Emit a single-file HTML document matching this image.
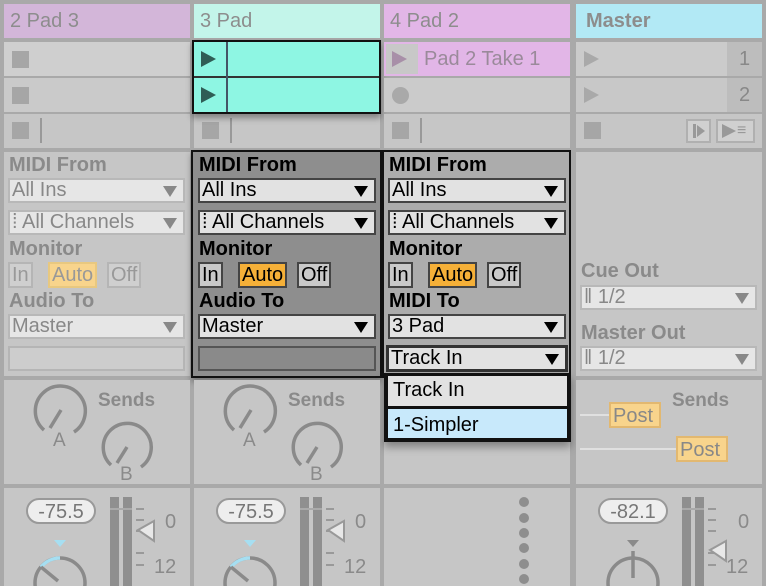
<!DOCTYPE html>
<html><head><meta charset="utf-8"><style>
*{box-sizing:border-box;margin:0;padding:0}
body{width:766px;height:586px;overflow:hidden;background:#a9a9a9;font-family:"Liberation Sans",sans-serif;position:relative}
.a{position:absolute}
.p{position:absolute;background:#c6c6c6}
.t{position:absolute;font-size:20px;white-space:nowrap;line-height:20px}
.b{font-weight:bold}
.g{color:#8a8a8a}
.dd{position:absolute;height:25px;background:#e6e6e6;border:2px solid #b8b8b8;font-size:20px;line-height:21px;padding-left:2px;white-space:nowrap}
.dd.k{border-color:#444;color:#000;background:#e2e2e2}
.dd .ar{position:absolute;right:6px;top:6px;width:0;height:0;border-left:7px solid transparent;border-right:7px solid transparent;border-top:11px solid #888}
.dd.k .ar{border-top-color:#000}
.btn{position:absolute;height:26px;border:2px solid #b5b5b5;font-size:20px;line-height:22px;padding:0 2px;color:#999;background:#cfcfcf}
.sq{position:absolute;width:17px;height:17px;background:#a6a6a6}
.pl{position:absolute;width:0;height:0;border-top:8px solid transparent;border-bottom:8px solid transparent;border-left:15px solid #a9a9a9}
</style></head><body>
<div class="p" style="left:4px;top:4px;width:186px;height:34px;background:#d3b6d9"></div>
<div class="t" style="left:10px;top:11px;color:#8d8d8d">2 Pad 3</div>
<div class="p" style="left:194px;top:4px;width:186px;height:34px;background:#c3f5ea"></div>
<div class="t" style="left:200px;top:11px;color:#8d8d8d">3 Pad</div>
<div class="p" style="left:384px;top:4px;width:186px;height:34px;background:#e2b6e7"></div>
<div class="t" style="left:390px;top:11px;color:#8d8d8d">4 Pad 2</div>
<div class="p" style="left:576px;top:4px;width:186px;height:34px;background:#b2e9f5"></div>
<div class="t b" style="left:586px;top:11px;color:#8d8d8d">Master</div>

<div class="p" style="left:4px;top:42px;width:186px;height:34px;background:#cfcfcf"></div>
<div class="sq" style="left:12px;top:51px"></div>
<div class="p" style="left:4px;top:78px;width:186px;height:34px;background:#cacaca"></div>
<div class="sq" style="left:12px;top:87px"></div>
<div class="p" style="left:4px;top:114px;width:186px;height:34px"></div>
<div class="sq" style="left:12px;top:122px"></div>
<div class="a" style="left:40px;top:118px;width:2px;height:25px;background:#999"></div>
<div class="p" style="left:194px;top:114px;width:186px;height:34px"></div>
<div class="sq" style="left:202px;top:122px"></div>
<div class="a" style="left:230px;top:118px;width:2px;height:25px;background:#999"></div>
<div class="a" style="left:192px;top:40px;width:189px;height:74px;background:#8ef6e3;border:2px solid #111;box-shadow:0 4px 6px rgba(0,0,0,.35)"></div>
<div class="a" style="left:194px;top:76px;width:185px;height:2px;background:#333"></div>
<div class="a" style="left:226px;top:42px;width:2px;height:70px;background:#456"></div>
<div class="pl" style="left:201px;top:51px;border-left-color:#2f5d55"></div>
<div class="pl" style="left:201px;top:87px;border-left-color:#2f5d55"></div>
<div class="p" style="left:384px;top:42px;width:186px;height:34px;background:#e2b6e7"></div>
<div class="a" style="left:386px;top:44px;width:32px;height:30px;background:#c8c8c8"></div>
<div class="pl" style="left:392px;top:51px;border-left-color:#a88fa8"></div>
<div class="t" style="left:424px;top:49px;color:#9a8a9a">Pad 2 Take 1</div>
<div class="p" style="left:384px;top:78px;width:186px;height:34px;background:#cbcbcb"></div>
<div class="a" style="left:392px;top:87px;width:17px;height:17px;border-radius:50%;background:#a9a9a9"></div>
<div class="p" style="left:384px;top:114px;width:186px;height:34px"></div>
<div class="sq" style="left:392px;top:122px"></div>
<div class="a" style="left:420px;top:118px;width:2px;height:25px;background:#999"></div>
<div class="p" style="left:576px;top:42px;width:186px;height:34px;background:#cbcbcb"></div>
<div class="a" style="left:727px;top:42px;width:35px;height:34px;background:#bdbdbd"></div>
<div class="pl" style="left:584px;top:51px"></div>
<div class="t" style="left:739px;top:49px;color:#888">1</div>
<div class="p" style="left:576px;top:78px;width:186px;height:34px;background:#c8c8c8"></div>
<div class="a" style="left:727px;top:78px;width:35px;height:34px;background:#bdbdbd"></div>
<div class="pl" style="left:584px;top:87px"></div>
<div class="t" style="left:739px;top:85px;color:#888">2</div>
<div class="p" style="left:576px;top:114px;width:186px;height:34px"></div>
<div class="sq" style="left:584px;top:122px"></div>
<div class="a" style="left:686px;top:119px;width:25px;height:24px;border:2px solid #b0b0b0;background:#d0d0d0"></div>
<div class="a" style="left:693px;top:124px;width:3px;height:14px;background:#999"></div>
<div class="pl" style="left:697px;top:125px;border-top-width:6px;border-bottom-width:6px;border-left-width:8px;border-left-color:#999"></div>
<div class="a" style="left:716px;top:119px;width:39px;height:24px;border:2px solid #b0b0b0;background:#d0d0d0"></div>
<div class="pl" style="left:722px;top:124px;border-top-width:7px;border-bottom-width:7px;border-left-width:14px;border-left-color:#999"></div>
<div class="t" style="left:737px;top:121px;color:#999;font-size:16px">≡</div>

<div class="p" style="left:4px;top:152px;width:186px;height:224px"></div>
<div class="t b g" style="left:9px;top:155px">MIDI From</div>
<div class="dd" style="left:8px;top:178px;width:177px;color:#888">All Ins<span class="ar"></span></div>
<div class="dd" style="left:8px;top:210px;width:177px;color:#888">⁞ All Channels<span class="ar"></span></div>
<div class="t b g" style="left:9px;top:239px">Monitor</div>
<div class="btn" style="left:8px;top:262px">In</div>
<div class="btn" style="left:48px;top:262px;background:#f8d48c;border-color:#e8c880;color:#999">Auto</div>
<div class="btn" style="left:107px;top:262px">Off</div>
<div class="t b g" style="left:9px;top:291px">Audio To</div>
<div class="dd" style="left:8px;top:314px;width:177px;color:#888">Master<span class="ar"></span></div>
<div class="a" style="left:8px;top:346px;width:177px;height:25px;border:2px solid #b5b5b5;background:#cdcdcd"></div>

<div class="a" style="left:191px;top:150px;width:191px;height:228px;background:#8e8e8e;border:2px solid #111;box-shadow:0 4px 6px rgba(0,0,0,.3)"></div>
<div class="t b" style="left:199px;top:155px">MIDI From</div>
<div class="dd k" style="left:198px;top:178px;width:178px">All Ins<span class="ar"></span></div>
<div class="dd k" style="left:198px;top:210px;width:178px">⁞ All Channels<span class="ar"></span></div>
<div class="t b" style="left:199px;top:239px">Monitor</div>
<div class="btn" style="left:198px;top:262px;border-color:#444;color:#000;background:#c9c9c9">In</div>
<div class="btn" style="left:238px;top:262px;background:#f5b038;border-color:#444;color:#000">Auto</div>
<div class="btn" style="left:297px;top:262px;border-color:#444;color:#000;background:#c9c9c9">Off</div>
<div class="t b" style="left:199px;top:291px">Audio To</div>
<div class="dd k" style="left:198px;top:314px;width:178px">Master<span class="ar"></span></div>
<div class="a" style="left:198px;top:346px;width:178px;height:25px;border:2px solid #555;background:#8a8a8a"></div>

<div class="p" style="left:384px;top:376px;width:186px;height:108px"></div>
<div class="a" style="left:382px;top:150px;width:189px;height:228px;background:#acacac;border:2px solid #111"></div>
<div class="t b" style="left:389px;top:155px">MIDI From</div>
<div class="dd k" style="left:388px;top:178px;width:178px">All Ins<span class="ar"></span></div>
<div class="dd k" style="left:388px;top:210px;width:178px">⁞ All Channels<span class="ar"></span></div>
<div class="t b" style="left:389px;top:239px">Monitor</div>
<div class="btn" style="left:388px;top:262px;border-color:#444;color:#000;background:#c9c9c9">In</div>
<div class="btn" style="left:428px;top:262px;background:#f5b038;border-color:#444;color:#000">Auto</div>
<div class="btn" style="left:487px;top:262px;border-color:#444;color:#000;background:#c9c9c9">Off</div>
<div class="t b" style="left:389px;top:291px">MIDI To</div>
<div class="dd k" style="left:388px;top:314px;width:178px">3 Pad<span class="ar"></span></div>
<div class="dd k" style="left:386px;top:345px;width:182px;height:27px;border-width:3px;border-color:#333">Track In<span class="ar"></span></div>
<div class="a" style="left:384px;top:373px;width:187px;height:69px;background:#111;box-shadow:0 5px 8px rgba(0,0,0,.35)"></div>
<div class="a" style="left:388px;top:376px;width:179px;height:30px;background:#e2e2e2"></div>
<div class="t" style="left:393px;top:380px">Track In</div>
<div class="a" style="left:388px;top:409px;width:179px;height:29px;background:#c8e9fb"></div>
<div class="t" style="left:393px;top:415px">1-Simpler</div>

<div class="p" style="left:576px;top:152px;width:186px;height:224px"></div>
<div class="t b g" style="left:581px;top:261px">Cue Out</div>
<div class="dd" style="left:580px;top:285px;width:177px;color:#888">ǁ 1/2<span class="ar"></span></div>
<div class="t b g" style="left:581px;top:323px">Master Out</div>
<div class="dd" style="left:580px;top:346px;width:177px;color:#888">ǁ 1/2<span class="ar"></span></div>

<div class="p" style="left:4px;top:380px;width:186px;height:104px"></div>
<div class="p" style="left:194px;top:380px;width:186px;height:104px"></div>
<div class="p" style="left:576px;top:380px;width:186px;height:104px"></div>
<svg class="a" style="left:0;top:376px" width="766" height="112" viewBox="0 376 766 112">
<g fill="none" stroke="#8a8a8a" stroke-width="3.5">
<g id="kn">
<path d="M44 430 A25 25 0 1 1 74 432"/><path d="M50 428 L61 410"/>
<path d="M111 465 A24 24 0 1 1 141 467"/><path d="M117 463 L127 447"/>
</g>
<use href="#kn" x="190"/>
<path d="M580 415 L610 415 M580 449 L678 449" stroke="#e0e0e0" stroke-width="2"/>
</g>
<g fill="#8a8a8a" font-size="19" font-family="Liberation Sans">
<text x="53" y="446">A</text><text x="120" y="480">B</text>
<text x="243" y="446">A</text><text x="310" y="480">B</text>
<text x="98" y="406" font-weight="bold">Sends</text>
<text x="288" y="406" font-weight="bold">Sends</text>
<text x="672" y="406" font-weight="bold">Sends</text>
</g>
<rect x="610" y="403" width="50" height="24" fill="#f8d48c" stroke="#e2b870" stroke-width="2"/>
<text x="613" y="422" font-size="20" fill="#888" font-family="Liberation Sans">Post</text>
<rect x="677" y="437" width="50" height="24" fill="#f8d48c" stroke="#e2b870" stroke-width="2"/>
<text x="680" y="456" font-size="20" fill="#888" font-family="Liberation Sans">Post</text>
</svg>

<div class="p" style="left:4px;top:488px;width:186px;height:98px"></div>
<div class="p" style="left:194px;top:488px;width:186px;height:98px"></div>
<div class="p" style="left:384px;top:488px;width:186px;height:98px"></div>
<div class="p" style="left:576px;top:488px;width:186px;height:98px"></div>
<svg class="a" style="left:0;top:488px" width="766" height="98" viewBox="0 488 766 98">
<g font-family="Liberation Sans" font-size="20" fill="#8a8a8a">
<g id="mx">
<rect x="27" y="499" width="68" height="24" rx="12" fill="#eee" stroke="#999" stroke-width="2"/>
<text x="61" y="518" text-anchor="middle" fill="#777">-75.5</text>
<rect x="110" y="497" width="9" height="89" fill="#8f8f8f"/><rect x="123" y="497" width="9" height="89" fill="#8f8f8f"/>
<rect x="110" y="508" width="22" height="2" fill="#aaa"/>
<path d="M136 509h8M136 520h8M136 531h8M136 553h8M136 565h8" stroke="#999" stroke-width="2"/>
<path d="M154 521 L138 530 L154 541 Z" fill="#e8e8e8" stroke="#999" stroke-width="2"/>
<text x="165" y="528">0</text><text x="154" y="573">12</text>
<circle cx="60" cy="583" r="25" fill="none" stroke="#8a8a8a" stroke-width="3.5"/>
<path d="M41 567 A25 25 0 0 1 60 558" fill="none" stroke="#a6dff2" stroke-width="3.5"/>
<path d="M54 540 L66 540 L60 547Z" fill="#a6dff2"/>
<path d="M41 567 L58 581" stroke="#8a8a8a" stroke-width="3.5"/>
</g>
<use href="#mx" x="190"/>
<g fill="#8e8e8e"><circle cx="524" cy="502" r="5"/><circle cx="524" cy="518" r="5"/><circle cx="524" cy="533" r="5"/><circle cx="524" cy="548" r="5"/><circle cx="524" cy="564" r="5"/><circle cx="524" cy="579" r="5"/></g>
<rect x="599" y="499" width="68" height="24" rx="12" fill="#eee" stroke="#999" stroke-width="2"/>
<text x="633" y="518" text-anchor="middle" fill="#777">-82.1</text>
<rect x="682" y="497" width="9" height="89" fill="#8f8f8f"/><rect x="695" y="497" width="9" height="89" fill="#8f8f8f"/>
<rect x="682" y="508" width="22" height="2" fill="#aaa"/>
<path d="M708 509h8M708 520h8M708 531h8M708 553h8M708 565h8" stroke="#999" stroke-width="2"/>
<path d="M726 541 L710 550 L726 561 Z" fill="#e8e8e8" stroke="#999" stroke-width="2"/>
<text x="738" y="528">0</text><text x="726" y="573">12</text>
<circle cx="633" cy="583" r="25" fill="none" stroke="#8a8a8a" stroke-width="3.5"/>
<path d="M627 540 L639 540 L633 547Z" fill="#8a8a8a"/>
<path d="M633 551 L633 578" stroke="#8a8a8a" stroke-width="3.5"/>
</g>
</svg>
</body></html>
